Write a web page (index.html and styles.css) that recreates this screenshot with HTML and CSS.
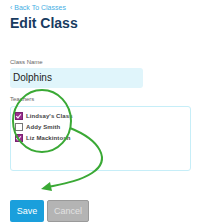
FILE: index.html
```html
<!DOCTYPE html>
<html>
<head>
<meta charset="utf-8">
<link rel="stylesheet" href="styles.css">
</head>
<body>
<div class="page">
  <a class="back" href="#">‹ Back To Classes</a>
  <h1 class="title">Edit Class</h1>
  <div class="label name-label">Class Name</div>
  <div class="input">Dolphins</div>
  <div class="label teachers-label">Teachers</div>
  <div class="box">
    <div class="row"><span class="cb checked"></span><span class="tname">Lindsay's Class</span></div>
    <div class="row"><span class="cb"></span><span class="tname">Addy Smith</span></div>
    <div class="row"><span class="cb checked"></span><span class="tname">Liz Mackintosh</span></div>
  </div>
  <div class="buttons">
    <div class="btn save">Save</div>
    <div class="btn cancel">Cancel</div>
  </div>
  <svg class="annot" width="200" height="224" viewBox="0 0 200 224">
    <ellipse cx="42" cy="121" rx="29" ry="31" fill="none" stroke="#3aa935" stroke-width="2"/>
    <path d="M70 128 C 100 140, 112 160, 92 173 C 80 181, 62 184, 48 187" fill="none" stroke="#3aa935" stroke-width="2"/>
    <polygon points="41,189 50,182 52,191" fill="#3aa935"/>
  </svg>
</div>
</body>
</html>
```
FILE: styles.css
```css
html, body { margin: 0; padding: 0; background: #fff; }
.page {
  position: relative;
  width: 200px;
  height: 224px;
  padding: 4px 9px 0 10px;
  box-sizing: border-box;
  font-family: "Liberation Sans", Arial, sans-serif;
  display: flex;
  flex-direction: column;
  align-items: flex-start;
}
.back {
  font-size: 7px;
  line-height: 8px;
  color: #45aee3;
  text-decoration: none;
}
.title {
  margin: 3px 0 0 0;
  font-size: 14px;
  line-height: 16px;
  font-weight: bold;
  color: #183b5f;
}
.label {
  font-size: 6px;
  line-height: 7px;
  color: #666;
}
.name-label { margin-top: 28px; }
.input {
  margin-top: 2px;
  width: 133px;
  height: 20px;
  box-sizing: border-box;
  background: #e0f5fb;
  border-radius: 3px;
  padding-left: 3px;
  font-size: 10px;
  line-height: 20px;
  color: #222;
}
.teachers-label { margin-top: 8px; }
.box {
  margin-top: 3px;
  width: 181px;
  height: 65px;
  box-sizing: border-box;
  border: 1px solid #c6eef8;
  border-radius: 3px;
  padding: 5px 0 0 4px;
  display: flex;
  flex-direction: column;
  gap: 4px;
}
.row {
  display: flex;
  align-items: center;
  gap: 3px;
  height: 7px;
}
.cb {
  width: 6px;
  height: 6px;
  border: 1px solid #777;
  background: #fff;
  box-sizing: content-box;
  position: relative;
}
.cb.checked {
  background: #9b2d8f;
  border-color: #7a2270;
}
.cb.checked::after {
  content: "";
  position: absolute;
  left: 1px;
  top: 0px;
  width: 2px;
  height: 4px;
  border-right: 1px solid #fff;
  border-bottom: 1px solid #fff;
  transform: rotate(40deg);
}
.tname {
  font-size: 6px;
  font-weight: bold;
  color: #444;
  letter-spacing: 0.1px;
}
.buttons {
  margin-top: 29px;
  display: flex;
  gap: 3px;
}
.btn {
  height: 22px;
  box-sizing: border-box;
  border-radius: 2px;
  font-size: 9px;
  line-height: 22px;
  text-align: center;
}
.save {
  width: 34px;
  background: #1a9fdc;
  color: #fff;
}
.cancel {
  width: 42px;
  background: #b4b4b4;
  border: 1px solid #9a9a9a;
  line-height: 20px;
  color: #e2e2e2;
}
.annot {
  position: absolute;
  left: 0;
  top: 0;
  pointer-events: none;
}
```
